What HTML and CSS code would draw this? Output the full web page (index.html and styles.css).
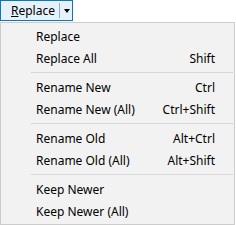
FILE: index.html
```html
<!DOCTYPE html>
<html lang="en">
<head>
    <meta charset="UTF-8">
    <title>Replace menu</title>
    <link rel="stylesheet" href="styles.css">
</head>
<body>
<div class="split-btn">
    <span class="split-label"><u>R</u>eplace</span>
    <span class="split-divider"></span>
    <span class="split-arrow"></span>
</div>
<div class="menu">
    <div class="menu-item"><span>Replace</span><span></span></div>
    <div class="menu-item"><span>Replace All</span><span>Shift</span></div>
    <div class="menu-sep"></div>
    <div class="menu-item"><span>Rename New</span><span>Ctrl</span></div>
    <div class="menu-item"><span>Rename New (All)</span><span>Ctrl+Shift</span></div>
    <div class="menu-sep"></div>
    <div class="menu-item"><span>Rename Old</span><span>Alt+Ctrl</span></div>
    <div class="menu-item"><span>Rename Old (All)</span><span>Alt+Shift</span></div>
    <div class="menu-sep"></div>
    <div class="menu-item"><span>Keep Newer</span><span></span></div>
    <div class="menu-item"><span>Keep Newer (All)</span><span></span></div>
</div>
</body>
</html>
```

FILE: styles.css
```css
body {
    margin: 0;
    font-family: "Noto Sans", "Open Sans", sans-serif;
    font-size: 12px;
    color: #000;
    background-color: #ffffff;
    width: 236px;
    height: 225px;
    overflow: hidden;
}
.split-btn {
    display: flex;
    align-items: center;
    width: 71px;
    height: 19px;
    border: 1px solid #0078d7;
    background-color: #e5f1fb;
    box-sizing: content-box;
}
.split-label {
    padding-left: 10px;
    width: 48px;
}
.split-label u {
    text-underline-offset: 1px;
}
.split-divider {
    width: 1px;
    height: 15px;
    background-color: #a0a8b0;
}
.split-arrow {
    margin-left: 4px;
    width: 0;
    height: 0;
    border-left: 3.5px solid transparent;
    border-right: 3.5px solid transparent;
    border-top: 4px solid #000;
}
.menu {
    margin-top: 1px;
    width: 233px;
    border: 1px solid #cccccc;
    background-color: #f2f2f2;
    padding: 2px 0;
}
.menu-item {
    display: flex;
    justify-content: space-between;
    align-items: center;
    height: 22px;
    padding: 0 19px 0 35px;
}
.menu-sep {
    height: 1px;
    margin: 3px 1px 3px 30px;
    background-color: #d7d7d7;
}
```
